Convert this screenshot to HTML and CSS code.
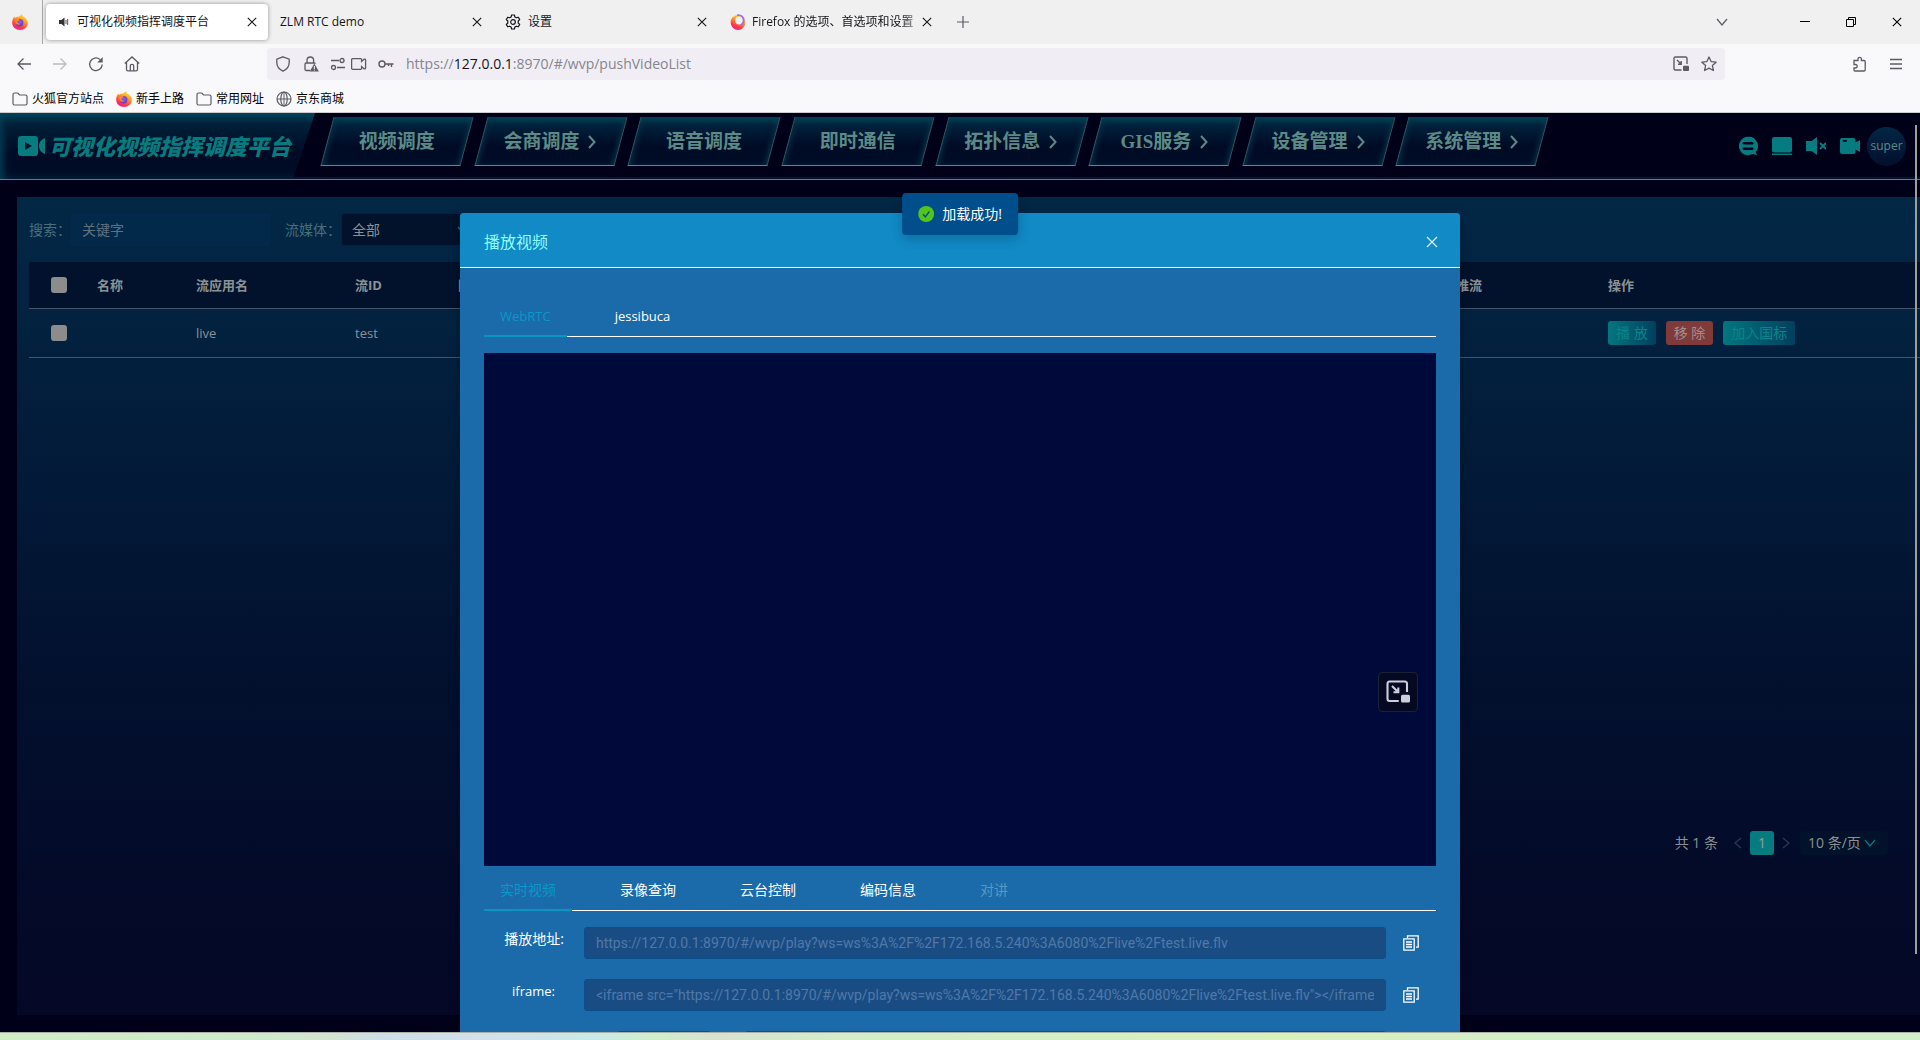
FILE: index.html
```html
<!DOCTYPE html>
<html lang="zh-CN">
<head>
<meta charset="utf-8">
<title>可视化视频指挥调度平台</title>
<link rel="stylesheet" href="styles.css">
</head>
<body>
<svg class="defs" aria-hidden="true">
  <defs>
    <linearGradient id="g-fox" x1="0.8" y1="0" x2="0.3" y2="1"><stop offset="0" stop-color="#fff04a"/><stop offset="0.4" stop-color="#ff9a1f"/><stop offset="0.75" stop-color="#ff3a4a"/><stop offset="1" stop-color="#e91d8d"/></linearGradient>
    <radialGradient id="g-globe" cx="0.5" cy="0.4" r="0.6"><stop offset="0" stop-color="#9059ff"/><stop offset="1" stop-color="#5a3fc4"/></radialGradient>
  </defs>
  <symbol id="i-fox" viewBox="0 0 16 16"><path fill="url(#g-fox)" d="M9.600 0c1 1 1.500 2.100 1.700 3 1-.2 1.500.2 2.200 1C15.200 5.500 15.800 7 15.800 9c0 4-3.500 7-7.700 7S.2 13 .2 8.800C.2 6 1 4 2.400 2.500l.5 1.600C4 3 5.300 2.600 6.500 2.700 7.600 1.900 9 1.500 9.600 0z"/><circle cx="7.700" cy="8.700" r="3.700" fill="url(#g-globe)"/><path fill="#ff8a1f" d="M3.500 5.500c1.500-.8 3-.3 4.200.3-.6 1.200-2 1.200-2.400 2 .2 1.500 1.500 2.200 3 1.900-1 1.500-3.800 1.300-4.600-.7-.4-1.200-.5-2.400-.2-3.500z"/></symbol>
  <symbol id="i-foxring" viewBox="0 0 16 16"><circle cx="8" cy="8.500" r="7.400" fill="url(#g-fox)"/><circle cx="9.200" cy="6.500" r="4" fill="#f0f0f0"/><path d="M7 1.300c4-.9 7 2 6.600 5.700-.2 2-1.600 3.600-3 4" fill="none" stroke="#9a6bf5" stroke-width="1.800"/></symbol>
  <symbol id="i-x" viewBox="0 0 10 10"><path d="M.8.8l8.400 8.400M9.200.8L.8 9.200" fill="none" stroke="currentColor" stroke-width="1.100"/></symbol>
  <symbol id="i-down" viewBox="0 0 12 12"><path d="M1 3l5 6 5-6" fill="none" stroke="currentColor" stroke-width="1.200"/></symbol>
  <symbol id="i-left" viewBox="0 0 12 12"><path d="M9 1L3 6l6 5" fill="none" stroke="currentColor" stroke-width="1.200"/></symbol>
  <symbol id="i-right" viewBox="0 0 12 12"><path d="M3 1l6 5-6 5" fill="none" stroke="currentColor" stroke-width="1.200"/></symbol>
  <symbol id="i-caret" viewBox="0 0 10 14"><path d="M2 1l5.500 6L2 13" fill="none" stroke="currentColor" stroke-width="2"/></symbol>
  <symbol id="i-folder" viewBox="0 0 16 16"><path d="M1 3.500c0-.8.600-1.500 1.500-1.500h3.300l1.700 2h6c.8 0 1.500.700 1.500 1.500v7c0 .8-.7 1.500-1.500 1.500h-11C1.700 14 1 13.300 1 12.500z" fill="none" stroke="#5b5b66" stroke-width="1.200"/></symbol>
  <symbol id="i-pip" viewBox="0 0 16 16"><path d="M14 8V2.500C14 1.700 13.500 1 12.600 1H2.400C1.500 1 1 1.700 1 2.500v10c0 .8.500 1.500 1.400 1.500h6.100M4 4l4 4M8.200 5v3.200H5" fill="none" stroke="currentColor" stroke-width="1.400"/><rect x="10" y="9.800" width="6" height="5.200" rx="1" fill="currentColor"/></symbol>
  <symbol id="i-copy" viewBox="0 0 16 16"><path d="M4.500 3V.8h10.700v11.400H13M.8 3.800h10.400v11.400H.8zM3 7h6M3 9.500h6M3 12h6" fill="none" stroke="currentColor" stroke-width="1.300"/></symbol>
</svg>

<header class="chrome">
  <div class="tabstrip">
    <div class="view-btn"><svg class="i16"><use href="#i-fox"/></svg></div>
    <div class="tabs">
      <div class="tab tab-active">
        <svg class="i12" viewBox="0 0 12 12"><path d="M1 4h2.500L6.500 1.500v9L3.500 8H1z" fill="#333"/><path d="M8 4v4M9.700 3v6" stroke="#555" fill="none"/></svg>
        <span class="tab-name">可视化视频指挥调度平台</span>
        <button class="bare" aria-label="关闭标签页"><svg class="i10"><use href="#i-x"/></svg></button>
      </div>
      <div class="tab">
        <span class="tab-name">ZLM RTC demo</span>
        <button class="bare" aria-label="关闭标签页"><svg class="i10"><use href="#i-x"/></svg></button>
      </div>
      <div class="tab">
        <svg class="i16" viewBox="0 0 16 16"><path d="M6.600 1h2.800l.5 2 1.400.8 2-.6 1.400 2.400L13.200 7v2l1.500 1.400-1.400 2.400-2-.6-1.400.8-.5 2H6.600l-.5-2-1.400-.8-2 .6-1.400-2.400L2.800 9V7L1.300 5.600l1.400-2.400 2 .6L6.100 3z" fill="none" stroke="#15141a" stroke-width="1.200" stroke-linejoin="round"/><circle cx="8" cy="8" r="2.300" fill="none" stroke="#15141a" stroke-width="1.200"/></svg>
        <span class="tab-name">设置</span>
        <button class="bare" aria-label="关闭标签页"><svg class="i10"><use href="#i-x"/></svg></button>
      </div>
      <div class="tab tab-long">
        <svg class="i16"><use href="#i-foxring"/></svg>
        <span class="tab-name tab-fade">Firefox 的选项、首选项和设置</span>
        <button class="bare" aria-label="关闭标签页"><svg class="i10"><use href="#i-x"/></svg></button>
      </div>
      <button class="bare tab-new" aria-label="新建标签页"><svg class="i12" viewBox="0 0 12 12"><path d="M6 0v12M0 6h12" stroke="#5b5b66" stroke-width="1.200"/></svg></button>
    </div>
    <div class="win">
      <button class="bare all-tabs" aria-label="列出所有标签页"><svg class="i12"><use href="#i-down"/></svg></button>
      <button class="bare" aria-label="最小化"><svg class="i10" viewBox="0 0 10 10"><path d="M0 4.500h10" stroke="#000"/></svg></button>
      <button class="bare" aria-label="还原"><svg class="i10" viewBox="0 0 10 10"><path d="M.5 2.500h7v7h-7zM2.500 2.500v-2h7v7h-2" fill="none" stroke="#000"/></svg></button>
      <button class="bare" aria-label="关闭"><svg class="i10"><use href="#i-x"/></svg></button>
    </div>
  </div>
  <div class="toolbar">
    <div class="nav-tools">
      <button class="bare" aria-label="后退"><svg class="i16" viewBox="0 0 16 16"><path d="M15 8H2M7.500 2.500L2 8l5.500 5.500" fill="none" stroke="currentColor" stroke-width="1.300"/></svg></button>
      <button class="bare dim" aria-label="前进"><svg class="i16" viewBox="0 0 16 16"><path d="M1 8h13M8.500 2.500L14 8l-5.500 5.500" fill="none" stroke="currentColor" stroke-width="1.300"/></svg></button>
      <button class="bare" aria-label="刷新"><svg class="i16" viewBox="0 0 16 16"><path d="M14.200 8.500A6.300 6.300 0 1 1 12 3.500" fill="none" stroke="currentColor" stroke-width="1.300"/><path d="M14.700 1v5.500H9.200z" fill="currentColor"/></svg></button>
      <button class="bare" aria-label="主页"><svg class="i16" viewBox="0 0 16 16"><path d="M.8 7.500L8 1l7.200 6.500M2.500 6v7.500c0 .8.600 1.400 1.400 1.400h8.200c.8 0 1.400-.6 1.400-1.400V6M6.300 14.500V10c0-1 .7-1.700 1.700-1.700S9.700 9 9.700 10v4.500" fill="none" stroke="currentColor" stroke-width="1.300"/></svg></button>
    </div>
    <div class="urlbar">
      <svg class="i16" viewBox="0 0 16 16"><path d="M8 .8l6.200 2.300v3.500c0 4-2.500 7-6.200 8.600C4.300 13.600 1.800 10.600 1.800 6.600V3.100z" fill="none" stroke="currentColor" stroke-width="1.300"/></svg>
      <svg class="i16 lock" viewBox="0 0 16 16"><path d="M4 7V4.300a3.300 3.300 0 0 1 6.600 0V7M7 14.500H3.200c-.7 0-1.200-.5-1.200-1.200v-5C2 7.500 2.500 7 3.200 7h8.200c.5 0 .8.200 1 .6" fill="none" stroke="currentColor" stroke-width="1.300"/><path d="M11.300 7.500l4.600 8H6.700z" fill="currentColor"/><path d="M11.300 10v3M11.300 13.600v1" stroke="#fff" /></svg>
      <svg class="i16" viewBox="0 0 16 16"><path d="M1 4.500h8M7 11.500h8" stroke="currentColor" stroke-width="1.400"/><circle cx="12" cy="4.500" r="2" fill="none" stroke="currentColor" stroke-width="1.300"/><circle cx="3.500" cy="11.500" r="2" fill="none" stroke="currentColor" stroke-width="1.300"/></svg>
      <svg class="i16 cam" viewBox="0 0 16 16"><path d="M1.600 2.700h8c.6 0 1 .4 1 1v1.800l2.300-2.200c.6-.5 1.700-.2 1.700.6v8.200c0 .8-1.100 1.100-1.700.6l-2.300-2.200v1.800c0 .6-.4 1-1 1h-8c-.6 0-1-.4-1-1V3.700c0-.6.4-1 1-1z" fill="none" stroke="currentColor" stroke-width="1.300"/></svg>
      <svg class="i16" viewBox="0 0 16 16"><circle cx="4" cy="8" r="3" fill="none" stroke="currentColor" stroke-width="1.400"/><path d="M7 8h8.500M13.500 8v3M10.500 8v2" fill="none" stroke="currentColor" stroke-width="1.400"/></svg>
      <span class="url">https://<b>127.0.0.1</b>:8970/#/wvp/pushVideoList</span>
      <button class="bare" aria-label="画中画"><svg class="i16"><use href="#i-pip"/></svg></button>
      <button class="bare" aria-label="收藏"><svg class="i16" viewBox="0 0 16 16"><path d="M8 1l2.100 4.600 5 .6-3.700 3.400 1 4.900L8 12.100l-4.400 2.400 1-4.900L.9 6.200l5-.6z" fill="none" stroke="currentColor" stroke-width="1.300" stroke-linejoin="round"/></svg></button>
    </div>
    <div class="end-tools">
      <button class="bare" aria-label="扩展"><svg class="i16" viewBox="0 0 16 16"><path d="M2 6V4.500h4V3a1.700 1.700 0 0 1 3.400 0v1.500H12c.7 0 1.200.5 1.200 1.200v8.100c0 .7-.5 1.200-1.200 1.200H3c-.6 0-1-.4-1-1V12h1.500a1.700 1.700 0 0 0 0-3.500H2z" fill="none" stroke="currentColor" stroke-width="1.300"/></svg></button>
      <button class="bare" aria-label="菜单"><svg class="i16" viewBox="0 0 16 16"><path d="M2 3.500h12M2 8h12M2 12.500h12" stroke="currentColor" stroke-width="1.300"/></svg></button>
    </div>
  </div>
  <nav class="bookmarks" aria-label="书签">
    <a href="#"><svg class="i16"><use href="#i-folder"/></svg>火狐官方站点</a>
    <a href="#"><svg class="i16"><use href="#i-fox"/></svg>新手上路</a>
    <a href="#"><svg class="i16"><use href="#i-folder"/></svg>常用网址</a>
    <a href="#"><svg class="i16" viewBox="0 0 16 16"><circle cx="8" cy="8" r="7" fill="none" stroke="#5b5b66" stroke-width="1.200"/><ellipse cx="8" cy="8" rx="3.200" ry="7" fill="none" stroke="#5b5b66" stroke-width="1.200"/><path d="M1 8h14M8 1v14" stroke="#5b5b66"/></svg>京东商城</a>
  </nav>
</header>

<main class="app">
  <div class="topbar">
    <h1 class="brand">
      <svg class="brand-cam" viewBox="0 0 27 20"><path fill="currentColor" fill-rule="evenodd" d="M3 0h14a3 3 0 0 1 3 3v14a3 3 0 0 1-3 3H3a3 3 0 0 1-3-3V3a3 3 0 0 1 3-3zm4 6v8l7-4zM27 2v16c-4-2-6-4-6-8s2-6 6-8z"/></svg>
      <span>可视化视频指挥调度平台</span>
    </h1>
    <nav class="menu" aria-label="主菜单">
      <a href="#"><span>视频调度</span></a>
      <a href="#"><span>会商调度</span><svg class="caret"><use href="#i-caret"/></svg></a>
      <a href="#"><span>语音调度</span></a>
      <a href="#"><span>即时通信</span></a>
      <a href="#"><span>拓扑信息</span><svg class="caret"><use href="#i-caret"/></svg></a>
      <a href="#"><span>GIS服务</span><svg class="caret"><use href="#i-caret"/></svg></a>
      <a href="#"><span>设备管理</span><svg class="caret"><use href="#i-caret"/></svg></a>
      <a href="#"><span>系统管理</span><svg class="caret"><use href="#i-caret"/></svg></a>
    </nav>
    <div class="status">
      <button class="bare" aria-label="消息"><svg class="i20" viewBox="0 0 20 20"><path fill="currentColor" d="M10 .8a9.200 9.200 0 1 0 4.500 17.300l4.800 1-1.700-3A9.200 9.200 0 0 0 10 .8z"/><path d="M5.500 6.500h9c1 0 1 1.500 0 1.500h-9c-1 0-1-1.500 0-1.500zM5.500 12h9c1 0 1 1.500 0 1.500h-9c-1 0-1-1.500 0-1.500z" fill="#00001a" stroke="#00001a"/></svg></button>
      <button class="bare" aria-label="屏幕"><svg class="i20" viewBox="0 0 20 20"><rect y="1" width="20" height="15.500" rx="2" fill="currentColor"/><rect y="17.500" width="20" height="1.500" fill="currentColor"/></svg></button>
      <button class="bare" aria-label="静音"><svg class="i20" viewBox="0 0 20 20"><path fill="currentColor" d="M0 5h5.500L11 1v18l-5.500-4H0z"/><path d="M14 7l6 6M20 7l-6 6" stroke="currentColor" stroke-width="2"/></svg></button>
      <button class="bare" aria-label="摄像"><svg class="i20" viewBox="0 0 20 20"><path fill="currentColor" fill-rule="evenodd" d="M2 2h11.500a2 2 0 0 1 2 2v2.500L20 4v12l-4.500-2.500V16a2 2 0 0 1-2 2H2a2 2 0 0 1-2-2V4a2 2 0 0 1 2-2zm.8 2v1.800h4V4z"/></svg></button>
      <button class="avatar">super</button>
    </div>
  </div>

  <section class="panel">
    <form class="filters">
      <label for="kw">搜索：</label>
      <input id="kw" class="kw" type="text" placeholder="关键字">
      <label for="media">流媒体：</label>
      <span class="pick"><select id="media" class="media"><option>全部</option></select><svg class="i12"><use href="#i-down"/></svg></span>
    </form>
    <div class="list">
      <table>
        <colgroup><col class="c-tick"><col class="c-name"><col class="c-app"><col class="c-id"><col><col class="c-push"><col class="c-ops"></colgroup>
        <thead>
          <tr><th><input type="checkbox" aria-label="全选"></th><th>名称</th><th>流应用名</th><th>流ID</th><th>国标编码</th><th>正在推流</th><th>操作</th></tr>
        </thead>
        <tbody>
          <tr><td><input type="checkbox" aria-label="选择 test"></td><td></td><td>live</td><td>test</td><td></td><td></td><td><div class="ops"><button class="op">播 放</button><button class="op op-del">移 除</button><button class="op">加入国标</button></div></td></tr>
        </tbody>
      </table>
    </div>
    <div class="pager">
      <span>共 1 条</span>
      <button class="bare" aria-label="上一页"><svg class="i12"><use href="#i-left"/></svg></button>
      <button class="page-on">1</button>
      <button class="bare" aria-label="下一页"><svg class="i12"><use href="#i-right"/></svg></button>
      <span class="pick pick-size"><select class="size" aria-label="每页条数"><option>10 条/页</option></select><svg class="i12"><use href="#i-down"/></svg></span>
    </div>
  </section>
  <div class="scrollbar"></div>

  <div class="overlay">
    <section class="modal" role="dialog" aria-labelledby="dlg-title">
      <header class="modal-head">
        <h2 id="dlg-title">播放视频</h2>
        <button class="bare" aria-label="关闭"><svg class="i12"><use href="#i-x"/></svg></button>
      </header>
      <div class="modal-body">
        <div class="tabline tabline-player">
          <button class="on">WebRTC</button><button>jessibuca</button>
        </div>
        <div class="video">
          <button class="pip" aria-label="画中画"><svg class="i24"><use href="#i-pip"/></svg></button>
        </div>
        <div class="tabline">
          <button class="on">实时视频</button><button>录像查询</button><button>云台控制</button><button>编码信息</button><button disabled>对讲</button>
        </div>
        <form class="fields">
          <label for="addr">播放地址:</label>
          <input id="addr" type="text" disabled value="https://127.0.0.1:8970/#/wvp/play?ws=ws%3A%2F%2F172.168.5.240%3A6080%2Flive%2Ftest.live.flv">
          <button type="button" class="bare" aria-label="复制播放地址"><svg class="i16"><use href="#i-copy"/></svg></button>
          <label for="frame">iframe:</label>
          <input id="frame" type="text" disabled value="&lt;iframe src=&quot;https://127.0.0.1:8970/#/wvp/play?ws=ws%3A%2F%2F172.168.5.240%3A6080%2Flive%2Ftest.live.flv&quot;&gt;&lt;/iframe&gt;">
          <button type="button" class="bare" aria-label="复制 iframe"><svg class="i16"><use href="#i-copy"/></svg></button>
          <div class="more"><button type="button" aria-label="更多地址"></button><input type="text" disabled aria-label="更多地址"></div>
        </form>
      </div>
    </section>
  </div>
  <div class="toast" role="status">
    <svg class="i16" viewBox="0 0 16 16"><circle cx="8" cy="8" r="8" fill="#52c41a"/><path d="M4.800 8.200l2.400 2.600 4-5.300" fill="none" stroke="#004f8c" stroke-width="1.400"/></svg>
    <span>加载成功!</span>
  </div>
</main>
<footer class="taskbar"></footer>
</body>
</html>
```
FILE: styles.css
```css
* { box-sizing: border-box; }
body {
  margin: 0;
  height: 100vh;
  display: flex;
  flex-direction: column;
  overflow: hidden;
  background: #000018;
  font: 14px/22px "Open Sans", "Noto Sans CJK SC", sans-serif;
}
h1, h2 { margin: 0; font-weight: 400; }
a { color: inherit; text-decoration: none; }
button, input, select { font: inherit; color: inherit; margin: 0; }
svg { display: block; flex: none; }
.defs { position: absolute; width: 0; height: 0; }
.bare { padding: 0; border: 0; background: none; display: flex; align-items: center; justify-content: center; }
.i10 { width: 10px; height: 10px; }
.i12 { width: 12px; height: 12px; }
.i16 { width: 16px; height: 16px; }
.i20 { width: 20px; height: 20px; }
.i24 { width: 24px; height: 24px; }

/* browser chrome */
.chrome { flex: none; background: #f9f9fb; color: #15141a; border-bottom: 1px solid #ccccd0; font-size: 12px; line-height: 18px; }
.tabstrip { display: flex; height: 44px; background: #f0f0f0; }
.view-btn { width: 43px; padding-left: 12px; display: flex; align-items: center; border-right: 1px solid #aaa; }
.tabs { display: flex; gap: 3px; padding: 4px 3px; flex: 1; }
.tab { width: 222px; padding: 0 11px 0 9px; display: flex; align-items: center; gap: 7px; border-radius: 4px; }
.tab-active { padding-left: 12px; background: #fff; box-shadow: 0 0 4px rgba(0,0,0,.4); }
.tab-name { flex: 1; white-space: nowrap; }
.tab-long { gap: 6px; }
.tab-fade { margin-right: -6px; -webkit-mask-image: linear-gradient(90deg, #000 88%, rgba(0,0,0,.2)); mask-image: linear-gradient(90deg, #000 88%, rgba(0,0,0,.2)); }
.tab-new { width: 34px; }
.win { display: flex; color: #000; }
.win .bare { width: 46px; }
.win .all-tabs { margin-right: 37px; color: #5b5b66; }
.toolbar { display: flex; height: 40px; padding: 4px 16px 4px; color: #5b5b66; }
.nav-tools { display: flex; gap: 20px; width: 251px; }
.dim { color: #bbbbc2; }
.urlbar { flex: 1; display: flex; align-items: center; padding: 0 8px; gap: 12px; background: #f0eef4; border-radius: 4px; }
.lock { margin-right: -1px; }
.cam { margin: 0 -1px 0 -7px; }
.url { flex: 1; font-size: 14px; line-height: 20px; color: #85858e; }
.url b { font-weight: 400; color: #15141a; }
.end-tools { width: 179px; display: flex; justify-content: flex-end; gap: 20px; }
.bookmarks { display: flex; gap: 12px; height: 28px; padding: 1px 12px 0; align-items: center; color: #000; }
.bookmarks a { display: flex; gap: 4px; align-items: center; }

/* application */
.app { flex: 1; min-height: 0; position: relative; display: flex; flex-direction: column; overflow: hidden; }
.topbar { flex: none; display: flex; height: 67px; border-bottom: 1px solid #588480; box-shadow: inset 0 -2px 0 #001630; }
.brand {
  width: 315px; padding: 0 0 0 18px; display: flex; align-items: center; gap: 4px;
  clip-path: polygon(0 0, 100% 0, 293px 100%, 0 100%);
  background: linear-gradient(#002840, #000c26 60%);
  box-shadow: inset 0 5px 8px #00485c, inset 6px 0 12px -4px #003048, inset 0 -4px 8px #00142e;
  color: #067c80; font-size: 22px; line-height: 30px; font-weight: 900; font-style: italic;
}
.brand span { white-space: nowrap; }
.brand-cam { width: 27px; height: 20px; }
.menu { flex: 0 1 1229px; display: flex; height: 53px; padding-top: 4px; margin: 0 auto 0 5px; font: bold 19px/28px "Liberation Serif", "Noto Sans CJK SC", serif; color: #5c8a86; }
.menu a { flex: 1; position: relative; z-index: 0; display: flex; justify-content: center; align-items: center; gap: 8px; height: 49px; white-space: nowrap; }
.menu a::before {
  content: ""; position: absolute; inset: 0 7px; z-index: -1; transform: skewX(-15deg);
  background: linear-gradient(#002a44, #000c26 60%);
  border: solid #34585e; border-width: 0 1px 1px; border-bottom-color: #5c8a86;
  box-shadow: inset 0 4px 6px #004458, inset 0 0 8px #001c36;
}
.caret { width: 10px; height: 14px; }
.status { display: flex; align-items: center; padding-right: 14px; color: #067c80; gap: 14px; }
.avatar { width: 39px; height: 39px; margin-left: -7px; padding: 0; border: 0; border-radius: 50%; background: linear-gradient(#022746, #020f2c); color: #5c8a86; font-size: 12px; }

.panel { flex: 1; min-height: 0; margin: 17px 0 17px 17px; padding: 16px 0 0 12px; display: flex; flex-direction: column; background: linear-gradient(#022846, #02102e 60%, #050726); color: #8c9294; }
.filters { display: flex; align-items: center; height: 33px; margin-bottom: 16px; color: #47707c; }
.kw { width: 199px; height: 32px; margin-right: 15px; padding: 0 10px; border: 1px solid #04294e; border-radius: 3px; background: #02284a; }
.kw::placeholder { color: #5e7280; opacity: 1; }
.pick { display: flex; align-items: center; color: #8c9294; }
.pick svg { margin: 0 12px 0 -24px; color: #067c80; pointer-events: none; }
.media { appearance: none; width: 140px; height: 33px; padding: 0 10px; border: 1px solid #04204a; border-radius: 3px; background: #02122a; }
.list { flex: 1; min-height: 0; overflow: hidden; font-size: 13px; }
table { width: 100%; table-layout: fixed; border-collapse: collapse; }
.c-tick { width: 52px; } .c-name { width: 99px; } .c-app { width: 159px; } .c-id { width: 103px; } .c-push { width: 178px; } .c-ops { width: 328px; }
th, td { padding: 0 16px; text-align: left; border-bottom: 1px solid #42566a; }
th { height: 46px; background: #02122c; white-space: nowrap; }
td { height: 49px; }
th:first-child, td:first-child { padding: 0 14px 0 22px; }
input[type=checkbox] { appearance: none; display: block; width: 16px; height: 16px; border-radius: 3px; background: #8c8c8c; }
.ops { display: flex; gap: 10px; }
.op { height: 24px; padding: 0 8px; border: 0; border-radius: 3px; background: linear-gradient(90deg, #047680, #00405f); color: #0a8488; font-size: 14px; line-height: 22px; }
.op-del { background: #803a3a; color: #9c9090; }
.pager { display: flex; align-items: center; height: 24px; margin: 0 32px 160px auto; }
.pager > .bare { width: 24px; color: #2c3c50; }
.pager > span:first-child { margin-right: 8px; }
.page-on { width: 24px; height: 24px; padding: 0; border: 0; border-radius: 3px; background: #067c80; color: #8ba09e; }
.pick-size { margin-left: 2px; }
.size { appearance: none; width: 88px; height: 24px; padding: 0 8px; border: 0; border-radius: 4px; background: #02122a; }
.scrollbar { position: absolute; top: 12px; right: 3px; bottom: 78px; width: 2px; background: #a09e98; }

/* play dialog */
.overlay { position: absolute; inset: 0; display: flex; justify-content: center; align-items: flex-start; padding-top: 100px; overflow: hidden; }
.modal { width: 1000px; border-radius: 4px 4px 0 0; background: #1b6aa9; color: #fff; box-shadow: 0 4px 12px rgba(0,0,0,.3); }
.modal-head { display: flex; justify-content: space-between; align-items: center; height: 55px; padding: 4px 22px 0 24px; border-bottom: 1px solid #fff; border-radius: 4px 4px 0 0; background: #118ac6; }
.modal-head h2 { font-size: 16px; line-height: 24px; color: #8ffcff; }
.modal-head .bare { color: #d8eaf4; }
.modal-body { padding: 24px 24px 0; }
.tabline { display: flex; gap: 32px; height: 45px; border-bottom: 1px solid #fff; }
.tabline button { height: 45px; padding: 4px 16px 0; border: 0; border-bottom: 2px solid transparent; background: none; color: #fff; }
.tabline .on { color: #0b98c8; border-bottom-color: #0a94c2; }
.tabline button:disabled { color: #5a96c4; }
.tabline-player { font-size: 13px; }
.video { display: flex; justify-content: flex-end; align-items: flex-start; height: 513px; margin-top: 16px; padding: 319px 18px 0 0; background: #000a3a; }
.pip { width: 40px; height: 40px; padding: 0; display: flex; align-items: center; justify-content: center; border: 1px solid #1c2236; border-radius: 4px; background: #050a22; color: #cdd0dc; }
.fields { display: grid; grid-template-columns: 100px 802px 50px; row-gap: 20px; margin-top: 16px; align-items: start; }
.fields label { justify-self: end; padding-right: 20px; line-height: 24px; }
.fields label[for=frame] { padding-right: 29px; font-size: 13px; }
.fields input { width: 100%; height: 32px; padding: 0 11px; border: 1px solid #0a4f8c; border-radius: 3px; background: #1a4c84; color: #5079a8; font-family: Roboto, sans-serif; }
.fields .bare { height: 32px; }
.more { grid-column: 2; display: flex; gap: 34px; padding-left: 33px; }
.more button { width: 94px; flex: none; border: 1px solid #0a4f8c; border-radius: 3px; background: #1b6aa9; }
.toast { position: absolute; top: 80px; left: 50%; transform: translateX(-50%); display: flex; gap: 8px; align-items: center; height: 42px; padding: 0 16px; border-radius: 4px; background: #004f8c; color: #fff; white-space: nowrap; box-shadow: 0 4px 12px rgba(0,0,0,.2); }
.taskbar { flex: none; height: 8px; border-top: 1px solid #aab0a8; background: linear-gradient(90deg, #d1edc6, #cceacb 14%, #d4e2d0 17%, #cbdee8 20%, #d3dfea 25%, #c9eae8 31%, #d0eecb 34%, #d8e2cf 37%, #d2eec8 45%, #d8f0bc 67%, #d2eec8 80%); }
```
